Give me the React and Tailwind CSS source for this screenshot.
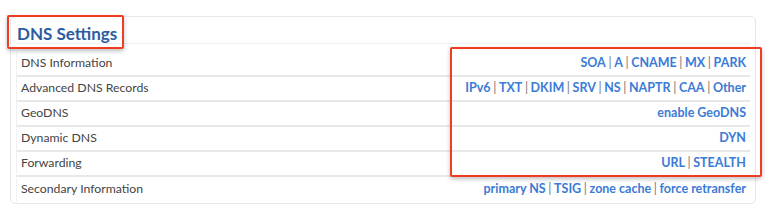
const rows = [
  { label: "DNS Information", links: ["SOA", "A", "CNAME", "MX", "PARK"] },
  { label: "Advanced DNS Records", links: ["IPv6", "TXT", "DKIM", "SRV", "NS", "NAPTR", "CAA", "Other"] },
  { label: "GeoDNS", links: ["enable GeoDNS"] },
  { label: "Dynamic DNS", links: ["DYN"] },
  { label: "Forwarding", links: ["URL", "STEALTH"] },
  { label: "Secondary Information", links: ["primary NS", "TSIG", "zone cache", "force retransfer"] },
];

const LinkList = ({ links }) => (
  <div className="flex items-center text-[12.5px] font-bold text-[#3a7bd6]">
    {links.map((l, i) => (
      <span key={l} className="flex items-center">
        {i > 0 && <span className="px-[2.6px] font-normal text-[#7a7a7a]">|</span>}
        <a href="#" className="hover:underline">
          {l}
        </a>
      </span>
    ))}
  </div>
);

export default function App() {
  return (
    <div className="relative w-[768px] h-[222px] overflow-hidden bg-white pt-[16px] pl-[10px] font-['Lato','Liberation_Sans',sans-serif]">
      <div className="w-[746px] h-[188px] rounded-[5px] border border-[#e3e8ef] px-[5px]">
        <div className="h-[27px] pt-[7px] pl-[1px] border-b border-[#edf0f4] text-[17px] leading-[20px] font-bold text-[#2b5c9f]">
          DNS Settings
        </div>
        <div className="mt-[8px] border-l border-[#f0f1f3]">
          {rows.map((r, i) => (
            <div
              key={r.label}
              className={`flex h-[25px] items-center justify-between pl-[4px] pr-[4px] ${
                i < rows.length - 1 ? "border-b-2 border-[#e8e8e8]" : ""
              }`}
            >
              <span className="text-[12.25px] text-[#444]">{r.label}</span>
              <LinkList links={r.links} />
            </div>
          ))}
        </div>
      </div>

      <div className="absolute left-[7px] top-[15px] w-[117px] h-[34px] rounded-[2px] border-2 border-[#f03c24] shadow-[0_2px_4px_rgba(0,0,0,0.25)]" />
      <div className="absolute left-[450px] top-[47px] w-[312px] h-[130px] rounded-[2px] border-2 border-[#f03c24] shadow-[0_2px_4px_rgba(0,0,0,0.25)]" />
    </div>
  );
}
